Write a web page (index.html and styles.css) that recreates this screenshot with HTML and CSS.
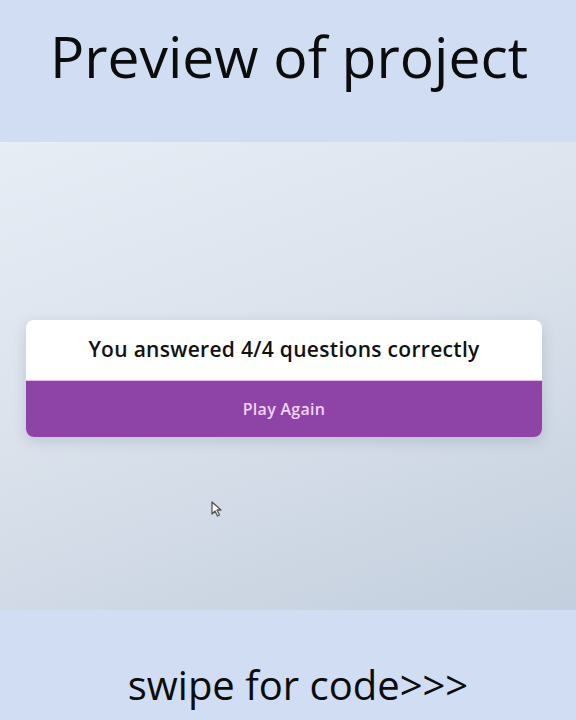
FILE: index.html
```html
<!DOCTYPE html>
<html lang="en">
<head>
    <meta charset="UTF-8">
    <meta name="viewport" content="width=device-width, initial-scale=1.0">
    <title>Quiz | Preview</title>
    <link rel="stylesheet" href="styles.css">
</head>
<body>
    <header class="banner">
        <h1>Preview of project</h1>
    </header>

    <main class="stage">
        <div class="result-card">
            <p class="score">You answered 4/4 questions correctly</p>
            <button class="replay">Play Again</button>
        </div>

        <!-- mouse pointer -->
        <svg class="pointer" width="12" height="16" viewBox="0 0 12 16">
            <path d="M1 1 L1 13 L4 10 L6.5 15 L8.5 14 L6 9 L10 9 Z" fill="#fff" stroke="#555" stroke-width="1.3" stroke-linejoin="round"/>
        </svg>
    </main>

    <footer class="banner bottom">
        <p>swipe for code&gt;&gt;&gt;</p>
    </footer>
</body>
</html>
```

FILE: styles.css
```css
* {
    box-sizing: border-box;
    margin: 0;
    padding: 0;
}

body {
    width: 576px;
    height: 720px;
    overflow: hidden;
    background: #d0ddf3;
    font-family: 'Open Sans', 'Noto Sans', sans-serif;
    color: #0c0c0c;
}

.banner {
    height: 142px;
    background: #d0ddf3;
    display: flex;
    justify-content: center;
}

.banner h1 {
    font-weight: 400;
    font-size: 57px;
    line-height: 1;
    padding-top: 28px;
    padding-left: 2px;
}

.banner.bottom {
    height: 110px;
}

.banner.bottom p {
    font-size: 40px;
    line-height: 1;
    padding-top: 55px;
    padding-left: 20px;
}

.stage {
    position: relative;
    height: 468px;
    background: linear-gradient(160deg, #e7edf5 0%, #dbe2ec 45%, #c3cfde 100%);
    padding: 178px 34px 0 26px;
}

.result-card {
    background: #fff;
    border-radius: 8px;
    overflow: hidden;
    box-shadow: 0 4px 14px rgba(60, 70, 90, 0.18);
}

.score {
    height: 60px;
    display: flex;
    align-items: center;
    justify-content: center;
    padding-bottom: 3px;
    font-size: 21px;
    font-weight: 600;
    letter-spacing: 0.3px;
    color: #111;
}

.replay {
    display: block;
    width: 100%;
    height: 57px;
    border: none;
    border-top: 1px solid #e9b7f3;
    background: #8e44a6;
    color: #f1d3f8;
    font-family: 'Open Sans', 'Noto Sans', sans-serif;
    font-size: 16px;
    font-weight: 600;
    letter-spacing: 0.3px;
    cursor: pointer;
}

.pointer {
    position: absolute;
    left: 211px;
    top: 359px;
}
```
